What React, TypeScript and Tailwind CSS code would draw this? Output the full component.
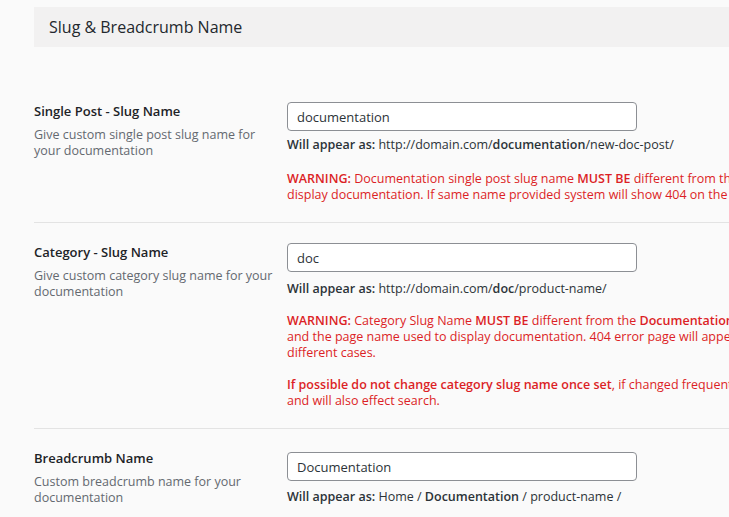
import React from "react";

const FONT = { fontFamily: '"Open Sans", "Noto Sans", "Liberation Sans", sans-serif' };

function Row({
  label,
  desc,
  value,
  children,
  className = "",
  inputClass = "",
}: {
  label: string;
  desc: string;
  value: string;
  children: React.ReactNode;
  className?: string;
  inputClass?: string;
}) {
  return (
    <div className={`grid grid-cols-[253px_640px] ${className}`}>
      <div className="pr-[10px]">
        <div className="text-[13px] leading-[18px] font-semibold text-[#1d2327]">{label}</div>
        <p className="mt-[7px] text-[12.5px] leading-[16px] text-[#646970]">{desc}</p>
      </div>
      <div>
        <input
          readOnly
          value={value}
          className={`block h-[29px] w-[350px] rounded-[4px] border border-[#8c8f94] bg-white px-[9px] text-[13px] text-[#2c3338] outline-none ${inputClass}`}
        />
        {children}
      </div>
    </div>
  );
}

export default function App() {
  return (
    <div className="h-[517px] w-[729px] overflow-hidden bg-[#fafafa]" style={FONT}>
      <div className="pl-[34px] pt-[7px]">
        <div className="flex h-[40px] w-[800px] items-center bg-[#f2f1f1] pl-[15px]">
          <h2 className="text-[16px] font-medium text-[#23282d]">Slug &amp; Breadcrumb Name</h2>
        </div>

        <div className="w-[900px]">
          <Row
            className="mt-[35px] pt-[20px] pb-[19px] border-b border-[#e3e3e3]"
            label="Single Post - Slug Name"
            desc="Give custom single post slug name for your documentation"
            value="documentation"
          >
            <p className="mt-[6px] text-[12.5px] leading-[16px] text-[#2c3338]">
              <b className="font-semibold">Will appear as:</b> http://domain.com/
              <b className="font-semibold">documentation</b>/new-doc-post/
            </p>
            <p className="mt-[18px] whitespace-nowrap text-[12.5px] leading-[16px] text-[#dc1f26]">
              <b className="font-semibold">WARNING:</b> Documentation single post slug name{" "}
              <b className="font-semibold">MUST BE</b> different from the page name used to
              <br />
              display documentation. If same name provided system will show 404 on the documentation page.
            </p>
          </Row>

          <Row
            className="pt-[20px] pb-[19px] border-b border-[#e3e3e3]"
            label="Category - Slug Name"
            desc="Give custom category slug name for your documentation"
            value="doc"
          >
            <p className="mt-[9px] text-[12.5px] leading-[16px] text-[#2c3338]">
              <b className="font-semibold">Will appear as:</b> http://domain.com/
              <b className="font-semibold">doc</b>/product-name/
            </p>
            <p className="mt-[16px] whitespace-nowrap text-[12.5px] leading-[16px] text-[#dc1f26]">
              <b className="font-semibold">WARNING:</b> Category Slug Name{" "}
              <b className="font-semibold">MUST BE</b> different from the{" "}
              <b className="font-semibold">Documentation Single Post Slug</b>
              <br />
              and the page name used to display documentation. 404 error page will appear in both
              <br />
              different cases.
            </p>
            <p className="mt-[16px] whitespace-nowrap text-[12.5px] leading-[16px] text-[#dc1f26]">
              <b className="font-semibold">If possible do not change category slug name once set</b>,
              if changed frequently it will affect the SEO
              <br />
              and will also effect search.
            </p>
          </Row>

          <Row
            className="pt-[20px]"
            inputClass="mt-[3px]"
            label="Breadcrumb Name"
            desc="Custom breadcrumb name for your documentation"
            value="Documentation"
          >
            <p className="mt-[8px] text-[12.5px] leading-[16px] text-[#2c3338]">
              <b className="font-semibold">Will appear as:</b> Home /{" "}
              <b className="font-semibold">Documentation</b> / product-name /
            </p>
          </Row>
        </div>
      </div>
    </div>
  );
}
